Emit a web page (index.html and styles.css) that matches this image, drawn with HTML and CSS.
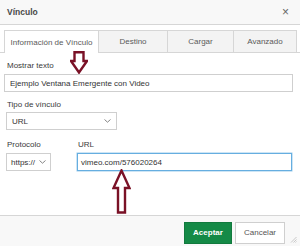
FILE: index.html
```html
<!DOCTYPE html>
<html>
<head>
<meta charset="utf-8">
<link rel="stylesheet" href="styles.css">
</head>
<body>
<div class="dialog">
  <div class="titlebar">
    <span class="title">Vínculo</span>
    <span class="close">×</span>
  </div>
  <div class="tabs">
    <div class="tab active t1">Información de Vínculo</div>
    <div class="tab t2">Destino</div>
    <div class="tab t3">Cargar</div>
    <div class="tab t4">Avanzado</div>
  </div>
  <div class="content">
    <label class="lbl first">Mostrar texto</label>
    <div class="input wide">Ejemplo Ventana Emergente con Video</div>
    <label class="lbl second">Tipo de vínculo</label>
    <div class="select type"><span>URL</span><svg class="chev" width="7" height="4" viewBox="0 0 7 4"><path d="M0.5 0.5 L3.5 3.2 L6.5 0.5" fill="none" stroke="#777" stroke-width="0.9"/></svg></div>
    <div class="row">
      <div class="col proto">
        <label class="lbl">Protocolo</label>
        <div class="select protosel"><span>https://</span><svg class="chev" width="7" height="4" viewBox="0 0 7 4"><path d="M0.5 0.5 L3.5 3.2 L6.5 0.5" fill="none" stroke="#777" stroke-width="0.9"/></svg></div>
      </div>
      <div class="col url">
        <label class="lbl">URL</label>
        <div class="input focus">vimeo.com/576020264</div>
      </div>
    </div>
  </div>
  <div class="footer">
    <div class="btn ok">Aceptar</div>
    <div class="btn cancel">Cancelar</div>
    <svg class="grip" width="7" height="7" viewBox="0 0 7 7"><path d="M6.5 1 L1 6.5 M6.5 3.5 L3.5 6.5 M6.5 5.5 L5.5 6.5" fill="none" stroke="#bbb" stroke-width="0.8"/></svg>
  </div>
  <svg class="arrow down" width="18" height="23" viewBox="0 0 18 23"><path d="M4.5 1.2 H13.5 V10 H17 L9 21.5 L1 10 H4.5 Z" fill="#fff" stroke="#7a1126" stroke-width="2.4" stroke-linejoin="miter"/></svg>
  <svg class="arrow up" width="19" height="45" viewBox="0 0 19 45"><path d="M9.5 1.5 L17.5 19 H13 V43.5 H6 V19 H1.5 Z" fill="#fff" stroke="#7a1126" stroke-width="2.4" stroke-linejoin="miter"/></svg>
</div>
</body>
</html>
```

FILE: styles.css
```css
* { box-sizing: border-box; }
html, body { margin: 0; padding: 0; }
body {
  width: 300px;
  height: 246px;
  overflow: hidden;
  font-family: "Liberation Sans", Arial, sans-serif;
  font-size: 8px;
  color: #3a3a3a;
  background: #fff;
}
.dialog {
  position: relative;
  width: 300px;
  height: 246px;
  display: flex;
  flex-direction: column;
  background: #fff;
}
.titlebar {
  height: 25px;
  background: #f8f8f8;
  border-bottom: 1px solid #d6d6d6;
  display: flex;
  align-items: center;
  justify-content: space-between;
  padding: 0 11px 0 7px;
}
.title {
  font-weight: bold;
  font-size: 8.5px;
  color: #484848;
}
.close {
  font-size: 12px;
  color: #666;
  line-height: 1;
}
.tabs {
  margin-top: 5px;
  padding-left: 4px;
  height: 23px;
  display: grid;
  grid-template-columns: 95px 69px 66px 63px;
  border-bottom: 1px solid #d6d6d6;
}
.tab {
  display: flex;
  align-items: center;
  justify-content: center;
  background: #f3f3f3;
  border: 1px solid #d6d6d6;
  border-left: none;
  border-bottom: none;
  color: #5a5a5a;
  font-size: 8px;
  height: 22px;
}
.tab.t1 { border-left: 1px solid #d6d6d6; }
.tab.active {
  background: #fff;
  height: 23px;
}
.content {
  flex: 1;
  padding: 0 8px 0 4px;
  display: flex;
  flex-direction: column;
}
.lbl {
  display: block;
  line-height: 10px;
  height: 10px;
  margin: 10px 0 3px 3px;
  color: #3a3a3a;
}
.lbl.first { margin-top: 8px; }
.lbl.second { margin-top: 8px; margin-bottom: 2px; }
.input {
  height: 18px;
  border: 1px solid #cfcfcf;
  display: flex;
  align-items: center;
  padding-left: 5px;
  color: #333;
  background: #fff;
}
.wide { width: 289px; }
.select {
  height: 18px;
  border: 1px solid #cfcfcf;
  display: flex;
  align-items: center;
  justify-content: space-between;
  padding: 0 5px 0 5px;
  margin-left: 2px;
  color: #333;
  background: #fff;
}
.select.type { width: 111px; }
.row {
  display: flex;
  gap: 26px;
}
.select.protosel { width: 45px; padding: 0 4px 0 4px; }
.col.url { flex: 1; }
.col.url .lbl { margin-left: 1px; }
.input.focus {
  border: 1px solid #66aee0;
  box-shadow: 0 0 0 0.5px #9bcbeb;
  padding-left: 3px;
}
.chev { display: block; }
.footer {
  height: 31px;
  background: #f8f8f8;
  border-top: 1px solid #d6d6d6;
  display: flex;
  align-items: center;
  justify-content: flex-end;
  padding: 3px 15px 0 0;
  gap: 3px;
  position: relative;
}
.btn {
  height: 22px;
  display: flex;
  align-items: center;
  justify-content: center;
  font-size: 8px;
}
.btn.ok {
  width: 48px;
  background: #158a47;
  color: #fff;
  font-weight: bold;
  border: 1px solid #127a3e;
}
.btn.cancel {
  width: 50px;
  background: #fff;
  color: #555;
  border: 1px solid #cfcfcf;
}
.grip {
  position: absolute;
  right: 3px;
  bottom: 3px;
}
.arrow { position: absolute; }
.arrow.down { left: 70px; top: 51px; }
.arrow.up { left: 112px; top: 169px; }
```
